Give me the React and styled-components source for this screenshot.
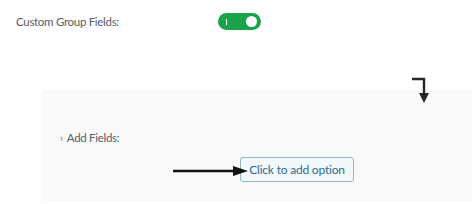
import React from 'react'
import styled, { createGlobalStyle } from 'styled-components'

const GlobalStyle = createGlobalStyle`
    body {
        margin: 0;
        background: #ffffff;
        font-family: Lato, "Open Sans", sans-serif;
    }
`

function App() {
    return (
        <Page>
            <GlobalStyle />
            <SettingRow>
                <Label>Custom Group Fields:</Label>
                <Toggle>
                    <ToggleMark />
                    <Knob />
                </Toggle>
            </SettingRow>

            <TurnArrow width="20" height="30" viewBox="0 0 20 30">
                <path d="M1 4 H13 V21" fill="none" stroke="#23282d" strokeWidth="2.4" />
                <path d="M8 18 L18 18 L13 28 Z" fill="#23282d" />
            </TurnArrow>

            <Panel>
                <FieldsTitle>
                    <Chevron>›</Chevron>
                    Add Fields:
                </FieldsTitle>
                <ButtonRow>
                    <AddButton>Click to add option</AddButton>
                </ButtonRow>
            </Panel>

            <PointArrow width="76" height="12" viewBox="0 0 76 12">
                <line x1="0" y1="6" x2="62" y2="6" stroke="#111" strokeWidth="2.4" />
                <path d="M60 1 L75 6 L60 11 Z" fill="#111" />
            </PointArrow>
        </Page>
    )
}

export default App

const Page = styled.div`
    position: relative;
    width: 474px;
    height: 204px;
    overflow: hidden;
`

const SettingRow = styled.div`
    display: flex;
    align-items: center;
    padding: 13px 0 0 16px;
    height: 17px;
`

const Label = styled.div`
    width: 202px;
    font-size: 11.5px;
    letter-spacing: -0.3px;
    color: #555d66;
`

const Toggle = styled.div`
    display: flex;
    align-items: center;
    justify-content: space-between;
    box-sizing: border-box;
    width: 43px;
    height: 17px;
    padding: 0 4px 0 8px;
    border-radius: 9px;
    background: #1aa34a;
`

const ToggleMark = styled.span`
    width: 1px;
    height: 6px;
    background: #ffffff;
`

const Knob = styled.span`
    width: 11px;
    height: 11px;
    border-radius: 50%;
    background: #ffffff;
`

const TurnArrow = styled.svg`
    position: absolute;
    left: 411px;
    top: 75px;
    z-index: 1;
`

const Panel = styled.div`
    margin: 60px 0 0 42px;
    width: 430px;
    height: 111px;
    box-sizing: border-box;
    padding-top: 41px;
    background: #f9f9f9;
`

const FieldsTitle = styled.div`
    display: flex;
    align-items: center;
    gap: 4px;
    padding-left: 18px;
    font-size: 11.5px;
    letter-spacing: -0.3px;
    color: #555d66;
`

const Chevron = styled.span`
    font-size: 11px;
    color: #777;
`

const ButtonRow = styled.div`
    display: flex;
    padding: 13px 0 0 198px;
`

const AddButton = styled.button`
    box-sizing: border-box;
    width: 114px;
    height: 25px;
    padding: 0;
    border: 1px solid #8fb6d0;
    border-radius: 3px;
    background: #f3f8fb;
    color: #2b6a92;
    font-family: Lato, "Open Sans", sans-serif;
    font-size: 12px;
    letter-spacing: -0.2px;
`

const PointArrow = styled.svg`
    position: absolute;
    left: 173px;
    top: 165px;
`
